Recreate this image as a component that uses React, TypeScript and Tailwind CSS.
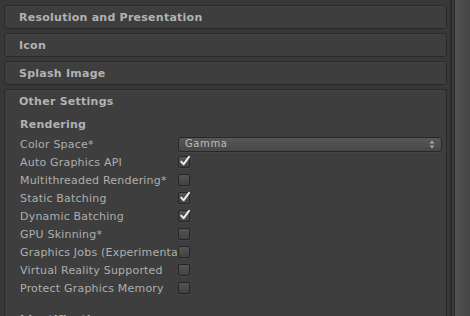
const FONT = "font-['DejaVu_Sans',Verdana,sans-serif]";

type Row = { label: string; kind: 'dropdown' | 'check'; value?: string; checked?: boolean };

const rows: Row[] = [
  { label: 'Color Space*', kind: 'dropdown', value: 'Gamma' },
  { label: 'Auto Graphics API', kind: 'check', checked: true },
  { label: 'Multithreaded Rendering*', kind: 'check', checked: false },
  { label: 'Static Batching', kind: 'check', checked: true },
  { label: 'Dynamic Batching', kind: 'check', checked: true },
  { label: 'GPU Skinning*', kind: 'check', checked: false },
  { label: 'Graphics Jobs (Experimental)*', kind: 'check', checked: false },
  { label: 'Virtual Reality Supported', kind: 'check', checked: false },
  { label: 'Protect Graphics Memory', kind: 'check', checked: false },
];

const Checkbox = ({ checked }: { checked?: boolean }): JSX.Element => (
  <div className="relative h-[12px] w-[12px] rounded-[2px] border border-[#262626] bg-gradient-to-b from-[#555555] to-[#414141] shadow-[0_1px_0_#464646]">
    {checked ? (
      <svg viewBox="0 0 12 12" className="absolute left-[0px] top-[-2px] h-[12px] w-[12px]">
        <path d="M2.2 6.6 L4.7 9.2 L10 1.8" fill="none" stroke="#ececec" strokeWidth="2" strokeLinecap="round" strokeLinejoin="round" />
      </svg>
    ) : null}
  </div>
);

const Dropdown = ({ value }: { value?: string }): JSX.Element => (
  <div className="flex h-[15px] flex-1 items-center justify-between rounded-[3px] border border-[#272727] bg-gradient-to-b from-[#575757] to-[#474747] pl-[6px] pr-[6px] shadow-[0_1px_0_#444]">
    <span className="text-[10px] leading-none tracking-[0.6px] text-[#bdbdbd]">{value}</span>
    <svg viewBox="0 0 6 9" className="h-[9px] w-[6px]">
      <path d="M3 0.5 L5.5 3.5 L0.5 3.5 Z" fill="#a8a8a8" />
      <path d="M3 8.5 L5.5 5.5 L0.5 5.5 Z" fill="#a8a8a8" />
    </svg>
  </div>
);

const Foldout = ({ title }: { title: string }): JSX.Element => (
  <div className="flex h-[24px] shrink-0 items-center rounded-[3px] border border-[#2a2a2a] bg-[#3e3e3e] pl-[14px] pt-[2px] shadow-[inset_0_1px_0_#444]">
    <span className="text-[11px] font-bold tracking-[0.25px] text-[#b2b2b2]">{title}</span>
  </div>
);

export default function App(): JSX.Element {
  return (
    <div className={`flex h-[316px] w-[470px] overflow-hidden bg-[#383838] ${FONT}`}>
      <div className="flex w-[450px] flex-col gap-[4px] pl-[4px] pr-[3px] pt-[5px]">
        <Foldout title="Resolution and Presentation" />
        <Foldout title="Icon" />
        <Foldout title="Splash Image" />
        <div className="flex h-[260px] shrink-0 flex-col rounded-t-[3px] border border-b-0 border-[#2a2a2a] bg-[#3e3e3e] pl-[15px] pr-[4px] shadow-[inset_0_1px_0_#444]">
          <div className="-ml-[1px] flex h-[23px] shrink-0 items-center pt-[2px]">
            <span className="text-[11px] font-bold tracking-[0.25px] text-[#b2b2b2]">Other Settings</span>
          </div>
          <div className="mt-[2px] flex h-[18px] shrink-0 items-center pt-[2px]">
            <span className="text-[11px] font-bold tracking-[0.25px] text-[#b2b2b2]">Rendering</span>
          </div>
          <div className="mt-[2px] flex shrink-0 flex-col">
            {rows.map((row) => (
              <div key={row.label} className="flex h-[18px] shrink-0 items-center">
                <div className="w-[157px] overflow-hidden whitespace-nowrap pt-[2px] text-[11px] tracking-[0.2px] text-[#aeaeae]">
                  {row.label}
                </div>
                <div className="ml-[1px] flex flex-1 items-center">
                  {row.kind === 'dropdown' ? <Dropdown value={row.value} /> : <Checkbox checked={row.checked} />}
                </div>
              </div>
            ))}
          </div>
          <div className="mt-[13px] flex h-[18px] shrink-0 items-center pt-[2px]">
            <span className="text-[11px] font-bold tracking-[0.25px] text-[#b2b2b2]">Identification</span>
          </div>
        </div>
      </div>
      <div className="w-[2px] bg-[#2b2b2b]" />
      <div className="w-[2px] bg-[#3a3a3a]" />
      <div className="w-[1px] bg-[#2a2a2a]" />
      <div className="flex-1 bg-gradient-to-r from-[#525252] to-[#464646]" />
    </div>
  );
}
